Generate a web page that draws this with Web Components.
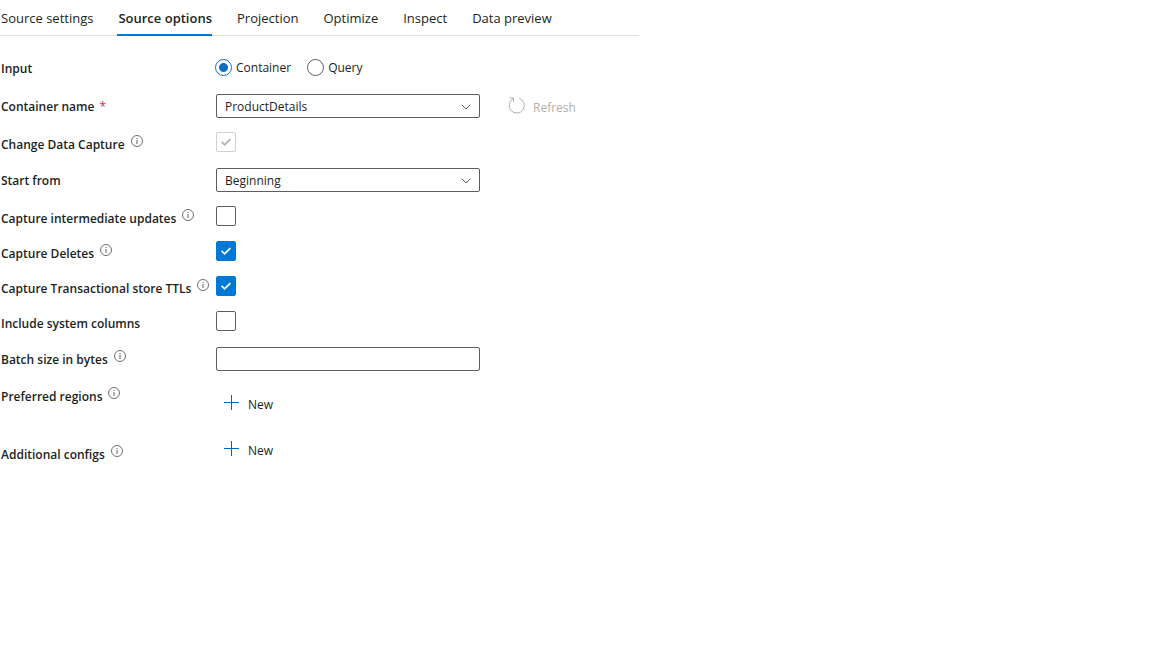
<!DOCTYPE html>
<html lang="en">
<head>
<meta charset="utf-8">
<title>Source options</title>
<style>
    body {
        margin: 0;
        background: #fff;
        color: #201f1e;
        font: 12px/16px "Open Sans", "Noto Sans", sans-serif;
    }
</style>
</head>
<body>
<source-panel>
    <tab-strip slot="tabs">
        <tab-item>Source settings</tab-item>
        <tab-item selected>Source options</tab-item>
        <tab-item>Projection</tab-item>
        <tab-item>Optimize</tab-item>
        <tab-item>Inspect</tab-item>
        <tab-item>Data preview</tab-item>
    </tab-strip>
    <radio-row label="Input" options="Container,Query" value="Container"></radio-row>
    <select-row label="Container name" required value="ProductDetails">
        <refresh-button slot="after">Refresh</refresh-button>
    </select-row>
    <check-row label="Change Data Capture" info checked disabled></check-row>
    <select-row label="Start from" value="Beginning"></select-row>
    <check-row label="Capture intermediate updates" info></check-row>
    <check-row label="Capture Deletes" info checked></check-row>
    <check-row label="Capture Transactional store TTLs" info checked></check-row>
    <check-row label="Include system columns"></check-row>
    <text-row label="Batch size in bytes" info></text-row>
    <list-row label="Preferred regions" info></list-row>
    <list-row label="Additional configs" info low></list-row>
</source-panel>

<script>
class SourcePanel extends HTMLElement {
    constructor() {
        super();
        this.attachShadow({ mode: 'open' }).innerHTML = `
        <style>
            :host {
                display: block;
                max-width: 639px;
            }
            .fields {
                display: grid;
                grid-template-rows: 35px 38px 36px 38px 35px 35px 35px 36px 37px 46px auto;
                padding-top: 23px;
            }
        </style>
        <slot name="tabs"></slot>
        <div class="fields"><slot></slot></div>
        `
    }
}

class TabStrip extends HTMLElement {
    constructor() {
        super();
        this.attachShadow({ mode: 'open' }).innerHTML = `
        <style>
            :host {
                display: flex;
                gap: 24px;
                height: 36px;
                box-sizing: border-box;
                box-shadow: inset 0 -1px #e1dfdd;
            }
        </style>
        <slot></slot>
        `
        this.setAttribute('role', 'tablist');
    }
}

class TabItem extends HTMLElement {
    constructor() {
        super();
        this.attachShadow({ mode: 'open' }).innerHTML = `
        <style>
            :host {
                display: flex;
            }
            button {
                padding: 2px 0 0 1px;
                border: 0;
                border-bottom: 2px solid transparent;
                background: none;
                color: inherit;
                font: 13px/20px "Open Sans", "Noto Sans", sans-serif;
                white-space: nowrap;
            }
            :host([selected]) button {
                border-color: #0078d4;
                font-weight: 600;
            }
        </style>
        <button type="button" role="tab"><slot></slot></button>
        `
    }
    connectedCallback() {
        this.shadowRoot.querySelector('button').setAttribute('aria-selected', this.hasAttribute('selected'));
    }
}

// label on the left, control on the right; subclasses give the control
class FieldRow extends HTMLElement {
    connectedCallback() {
        if (this.shadowRoot) return;
        const star = this.hasAttribute('required') ? '<span class="star">*</span>' : '';
        const info = this.hasAttribute('info') ? `
            <svg class="info" viewBox="0 0 12 12" width="12" height="12" aria-hidden="true">
                <circle cx="6" cy="6" r="5.5" fill="none" stroke="#605e5c" stroke-width=".9"/>
                <path d="M6 5v4M6 3v1" stroke="#605e5c"/>
            </svg>` : '';
        this.attachShadow({ mode: 'open' }).innerHTML = `
        <style>
            :host {
                display: grid;
                grid-template-columns: 216px 1fr;
                align-items: start;
            }
            :host([low]) .label {
                align-self: end;
            }
            .label {
                display: flex;
                align-items: center;
                height: 24px;
                padding: 1px 0 0 1px;
                font-weight: 600;
                white-space: nowrap;
            }
            .star {
                margin-left: 5px;
                color: #d13438;
                font-weight: 400;
            }
            .info {
                margin: 0 0 8px 6px;
            }
            .control {
                display: flex;
                align-items: center;
            }
            select, input, button {
                color: inherit;
                font: inherit;
            }
            ${this.styles()}
        </style>
        ${this.caption(this.getAttribute('label'), star + info)}
        <div class="control">${this.control()}<slot name="after"></slot></div>
        `
    }
    caption(text, extra) {
        return `<label class="label" for="field">${text}${extra}</label>`;
    }
    styles() { return ''; }
    control() { return ''; }
}

class RadioRow extends FieldRow {
    caption(text, extra) {
        return `<span class="label" id="caption">${text}${extra}</span>`;
    }
    styles() {
        return `
            .label {
                height: 18px;
            }
            .group {
                display: flex;
                gap: 16px;
                margin-left: -1px;
            }
            .group label {
                display: flex;
                align-items: center;
                gap: 4px;
                font-size: 12px;
            }
            input {
                appearance: none;
                box-sizing: border-box;
                width: 17px;
                height: 17px;
                margin: 0;
                border: 1px solid #605e5c;
                border-radius: 50%;
            }
            input:checked {
                border-color: #106ebe;
                background: radial-gradient(circle, #106ebe 4px, transparent 5px);
            }
        `;
    }
    control() {
        const value = this.getAttribute('value');
        const items = this.getAttribute('options').split(',').map(o =>
            `<label><input type="radio" name="choice" ${o === value ? 'checked' : ''}>${o}</label>`);
        return `<div class="group" role="radiogroup" aria-labelledby="caption">${items.join('')}</div>`;
    }
}

class SelectRow extends FieldRow {
    styles() {
        return `
            .box {
                display: grid;
                flex: 0 1 264px;
                align-items: center;
            }
            .box > * {
                grid-area: 1 / 1;
            }
            select {
                appearance: none;
                box-sizing: border-box;
                width: 100%;
                height: 24px;
                padding: 2px 28px 0 8px;
                border: 1px solid #605e5c;
                border-radius: 2px;
                background: #fff;
            }
            .box svg {
                justify-self: end;
                margin: 2px 9px 0 0;
                pointer-events: none;
            }
        `;
    }
    control() {
        return `
            <div class="box">
                <select id="field"><option>${this.getAttribute('value')}</option></select>
                <svg width="10" height="6" viewBox="0 0 10 6" aria-hidden="true">
                    <path d="M.8 .8L5 5L9.2 .8" fill="none" stroke="#605e5c"/>
                </svg>
            </div>`;
    }
}

class CheckRow extends FieldRow {
    styles() {
        return `
            .box {
                display: grid;
            }
            .box > * {
                grid-area: 1 / 1;
            }
            input {
                appearance: none;
                box-sizing: border-box;
                width: 20px;
                height: 20px;
                margin: 0;
                border: 1px solid #605e5c;
                border-radius: 2px;
            }
            input:checked {
                border-color: #0078d4;
                background: #0078d4;
            }
            input:disabled {
                border-color: #d2d0ce;
                background: #fff;
            }
            svg {
                pointer-events: none;
            }
            .tick {
                place-self: center;
                fill: none;
                stroke: #fff;
                stroke-width: 1.8;
                visibility: hidden;
            }
            input:checked + .tick {
                visibility: visible;
            }
            input:disabled + .tick {
                stroke: #b3b0ad;
            }
        `;
    }
    control() {
        const state = ['checked', 'disabled'].filter(a => this.hasAttribute(a)).join(' ');
        return `
            <div class="box">
                <input type="checkbox" id="field" ${state}>
                <svg class="tick" width="12" height="12" viewBox="0 0 12 12" aria-hidden="true">
                    <path d="M1.6 5.9L4.6 8.8L10.4 3.1"/>
                </svg>
            </div>`;
    }
}

class TextRow extends FieldRow {
    styles() {
        return `
            input {
                box-sizing: border-box;
                flex: 0 1 264px;
                min-width: 0;
                height: 24px;
                padding: 0 8px;
                border: 1px solid #605e5c;
                border-radius: 2px;
            }
        `;
    }
    control() {
        return '<input type="text" id="field">';
    }
}

class ListRow extends FieldRow {
    styles() {
        return `
            button {
                display: flex;
                align-items: center;
                gap: 9px;
                height: 37px;
                padding: 0 8px;
                border: 0;
                background: none;
            }
            button span {
                padding-top: 4px;
            }
        `;
    }
    control() {
        return `
            <button type="button" id="field">
                <svg width="15" height="15" viewBox="0 0 15 15" aria-hidden="true">
                    <path d="M7.5 0v15M0 7.5h15" fill="none" stroke="#0067b8"/>
                </svg>
                <span>New</span>
            </button>`;
    }
}

class RefreshButton extends HTMLElement {
    constructor() {
        super();
        this.attachShadow({ mode: 'open' }).innerHTML = `
        <style>
            :host {
                display: block;
                margin-left: 28px;
            }
            button {
                display: flex;
                align-items: center;
                gap: 8px;
                height: 24px;
                padding: 0;
                border: 0;
                background: none;
                color: #b3b0ad;
                font: inherit;
            }
            svg {
                margin-bottom: 2px;
            }
            span {
                padding-top: 4px;
            }
        </style>
        <button type="button" disabled>
            <svg width="17" height="17" viewBox="0 0 17 17" fill="none" stroke="#b3b0ad" aria-hidden="true">
                <path d="M11.3 1.3A7.6 7.6 0 1 1 5.4 1.6M1.5 .8H5.6V4.9"/>
            </svg>
            <span><slot></slot></span>
        </button>
        `
    }
}

customElements.define('source-panel', SourcePanel);
customElements.define('tab-strip', TabStrip);
customElements.define('tab-item', TabItem);
customElements.define('radio-row', RadioRow);
customElements.define('select-row', SelectRow);
customElements.define('check-row', CheckRow);
customElements.define('text-row', TextRow);
customElements.define('list-row', ListRow);
customElements.define('refresh-button', RefreshButton);
</script>
</body>
</html>
